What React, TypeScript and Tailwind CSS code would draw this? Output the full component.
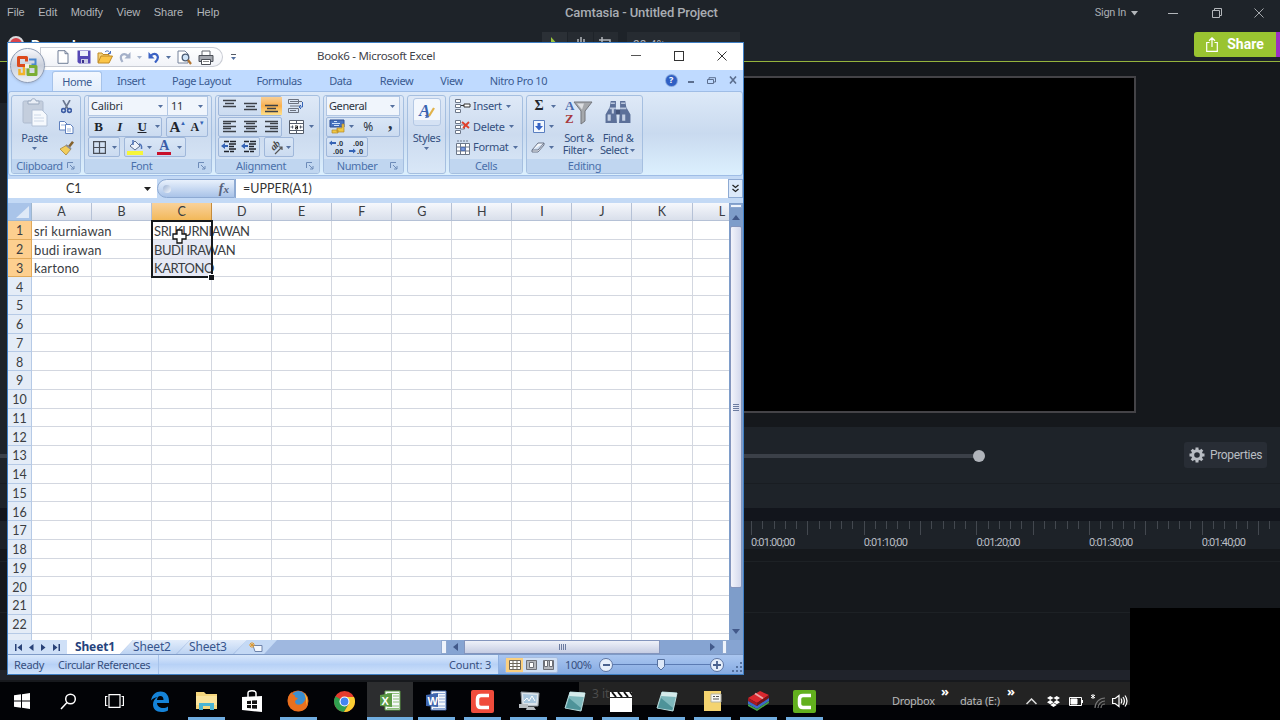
import { ReactNode } from "react";
import { clsx } from "clsx";
import { SiDropbox } from "react-icons/si";

const columns = ["A", "B", "C", "D", "E", "F", "G", "H", "I", "J", "K", "L"];
const rows = Array.from({ length: 23 }, (_, i) => i + 1);

const cells: Record<string, string> = {
  A1: "sri kurniawan",
  A2: "budi irawan",
  A3: "kartono",
  C1: "SRI KURNIAWAN",
  C2: "BUDI IRAWAN",
  C3: "KARTONO",
};

// cells whose right gridline is covered by overflowing text
const overflowing = ["A1", "A2", "C1", "C2"];

const ribbonTabs = [
  { label: "Home", width: "w-[50px]", active: true },
  { label: "Insert", width: "w-[58px]" },
  { label: "Page Layout", width: "w-[83px]" },
  { label: "Formulas", width: "w-[72px]" },
  { label: "Data", width: "w-[51px]" },
  { label: "Review", width: "w-[61px]" },
  { label: "View", width: "w-[49px]" },
  { label: "Nitro Pro 10", width: "w-[85px]" },
];

function Caret({ className = "w-3" }: { className?: string }) {
  return (
    <span className={clsx("flex justify-center shrink-0", className)}>
      <svg className="shrink-0" width="5" height="3" viewBox="0 0 5 3">
        <path d="M0 0h5L2.500 3z" fill="#54709f" />
      </svg>
    </span>
  );
}

function Cell({ className, children }: { className: string; children: ReactNode }) {
  return <span className={clsx("flex self-stretch items-center justify-center shrink-0", className)}>{children}</span>;
}

function Box({ className, children }: { className: string; children: ReactNode }) {
  return (
    <div className={clsx("flex h-5 items-center rounded-[2px] border border-[#9fb7da] bg-gradient-to-b from-[#d9e6f6] to-[#cbdbf0]", className)}>
      {children}
    </div>
  );
}

function Group({ label, className, launcher, children }: { label?: string; className: string; launcher?: boolean; children: ReactNode }) {
  return (
    <div className={clsx("flex h-[79px] shrink-0 flex-col overflow-hidden rounded-[3px] border border-[#a5bfe0] bg-gradient-to-b from-[#dfe9f7] via-[#ccdbef] to-[#d9e7f7]", className)}>
      <div className="h-[63px] shrink-0">{children}</div>
      {label && (
        <div className="flex h-[15px] items-center bg-[#c0d6f0] text-[#4a70ab]">
          <span className="flex-1 text-center">{label}</span>
          {launcher && (
            <svg className="mr-[5px] shrink-0" width="8" height="8" viewBox="0 0 8 8" fill="none" stroke="#6d8bb8">
              <path d="M.5 6V.5H6M3 3l4 4M7 4v3H4" />
            </svg>
          )}
        </div>
      )}
    </div>
  );
}

function AlignIcon({ lines }: { lines: number[][] }) {
  return (
    <svg width="15" height="14" viewBox="0 0 15 14" stroke="#3c4148" strokeWidth="1.300">
      {lines.map(([x1, x2, y]) => (
        <path key={y} d={`M${x1} ${y}.5H${x2}`} />
      ))}
    </svg>
  );
}

function IndentIcon() {
  return (
    <svg width="16" height="14" viewBox="0 0 16 14">
      <path d="M3 1.500h5M9 1.500h6M8 4h7M8 6.500h5M8 9h7M3 11.500h5M9 11.500h4" stroke="#20242c" strokeWidth="1.600" />
      <path d="M0 6l4-3v2h3v2H4v2z" fill="#3563b5" />
    </svg>
  );
}

function GearIcon() {
  return (
    <svg width="16" height="16" viewBox="0 0 16 16" fill="none" stroke="#b9bdc3">
      <circle cx="8" cy="8" r="4.300" strokeWidth="3" />
      <path d="M8 .5v3M8 12.500v3M.5 8h3M12.500 8h3M2.700 2.700l2 2M11.300 11.300l2 2M13.300 2.700l-2 2M4.700 11.300l-2 2" strokeWidth="3" />
    </svg>
  );
}

function TitleBar() {
  return (
    <div className="flex h-[27px] shrink-0 bg-white">
      <div className="ml-8 mt-1 flex h-5 w-[183px] items-center rounded-r-full rounded-tl-[6px] border border-[#c9ccd4] bg-gradient-to-b from-white to-[#f1f3f8] pl-[11px]">
        <Cell className="w-[21px]">
          <svg width="12" height="14" viewBox="0 0 12 14">
            <path d="M1 .7h7l3 3v9.600H1z" fill="#fff" stroke="#6f7d96" />
            <path d="M8 .7v3h3" fill="none" stroke="#6f7d96" />
          </svg>
        </Cell>
        <Cell className="w-[21px]">
          <svg width="14" height="14" viewBox="0 0 14 14">
            <path d="M.5.5h13v13H2L.5 12z" fill="#5547b5" />
            <path d="M3 1h8v5H3z" fill="#eef0fb" />
            <path d="M4 9h7v4.500H4z" fill="#c9cbe2" />
            <path d="M5 10h2v3H5z" fill="#3b318c" />
          </svg>
        </Cell>
        <Cell className="w-[21px]">
          <svg width="16" height="14" viewBox="0 0 16 14">
            <path d="M1 12.500V3h4l1 1.500h6V7" fill="#f5d27a" stroke="#c08a25" />
            <path d="M1 13l3-7h11.500l-3.500 7z" fill="#fbc548" stroke="#c08a25" />
            <path d="M8 2c2-2 4-1 5 1M13.500 1v2.500h-2.500" fill="none" stroke="#456ec0" />
          </svg>
        </Cell>
        <Cell className="w-[19px]">
          <svg width="12" height="12" viewBox="0 0 12 12" fill="none">
            <path d="M3.500 11C-1 4 5 1 9 5" stroke="#a5b1c9" strokeWidth="2.200" />
            <path d="M11.500 1v6.500H5.500z" fill="#a5b1c9" />
          </svg>
        </Cell>
        <span className="w-[10px] opacity-50"><Caret className="w-[10px]" /></span>
        <Cell className="w-[20px]">
          <svg width="12" height="12" viewBox="0 0 12 12" fill="none">
            <path d="M7 11.500C13 6 8 0 3 4.500" stroke="#3b62c4" strokeWidth="2.200" />
            <path d="M.5 1v6.500h6z" fill="#3b62c4" />
          </svg>
        </Cell>
        <Caret className="w-[9px]" />
        <Cell className="w-[23px]">
          <svg width="15" height="15" viewBox="0 0 15 15">
            <path d="M1 1h7l3 3v9H1z" fill="#fff" stroke="#74829b" />
            <circle cx="8.500" cy="7.500" r="3.300" fill="#cfe3f7" stroke="#4c5c75" strokeWidth="1.300" />
            <path d="M11 10l3 4" stroke="#b27430" strokeWidth="2.200" />
          </svg>
        </Cell>
        <Cell className="w-[19px]">
          <svg width="16" height="15" viewBox="0 0 16 15">
            <path d="M4 6V1h8v5" fill="#fff" stroke="#62666e" />
            <path d="M1 5.500h14v6H1z" fill="#a4a7ae" stroke="#4b4f57" />
            <path d="M3.500 9.500h9v5h-9z" fill="#fff" stroke="#4b4f57" />
            <path d="M5 11.500h6" stroke="#888" />
          </svg>
        </Cell>
      </div>
      <div className="flex w-5 flex-col items-center justify-center gap-[2px]">
        <span className="h-px w-[5px] bg-[#555b66]" />
        <Caret />
      </div>
      <span className="ml-[74px] flex h-[25px] items-center text-[11.5px] tracking-[-0.3px] text-[#3f434a]">Book6 - Microsoft Excel</span>
      <div className="ml-auto flex h-[25px] text-[#333]">
        <Cell className="w-[42px]"><span className="h-px w-[10px] bg-[#555]" /></Cell>
        <Cell className="w-[43px]"><span className="size-[10px] border border-[#333]" /></Cell>
        <Cell className="w-[43px]">
          <svg width="10" height="10" viewBox="0 0 10 10" stroke="#333"><path d="M.5.5l9 9M9.500.5l-9 9" /></svg>
        </Cell>
      </div>
    </div>
  );
}

function OfficeOrb() {
  return (
    <div className="absolute left-[2px] top-[5px] flex size-[35px] items-center justify-center rounded-full border border-[#8e9cb5] bg-gradient-to-b from-[#f8f9fc] via-[#c9cfdb] to-[#eef2f9] shadow">
      <svg width="23" height="23" viewBox="0 0 23 23" fill="none" strokeWidth="3">
        <path d="M9.500 11.500H2.500V3.500h8v4" stroke="#dc4a1c" strokeLinejoin="round" />
        <path d="M13 5.500h6.500v5h-4" stroke="#4a87cf" strokeWidth="2" />
        <path d="M8 13v7H3.500v-5" stroke="#f2b32a" strokeWidth="2.500" />
        <path d="M12.500 12.500h7.500v8h-8v-6" stroke="#7bae35" strokeLinejoin="round" />
        <path d="M9 10h4v4H9z" fill="#f5f1de" stroke="none" />
      </svg>
    </div>
  );
}

function TabStrip() {
  return (
    <div className="flex h-[21px] shrink-0 items-end bg-[#bfdaff] pl-[44px] text-[#3a5b92]">
      {ribbonTabs.map((tab) => (
        <div
          key={tab.label}
          className={clsx(
            "flex h-5 shrink-0 items-center justify-center whitespace-nowrap",
            tab.width,
            tab.active && "rounded-t-[3px] border border-b-0 border-[#a6c3ea] bg-gradient-to-b from-[#f4f8fe] to-[#e4eefb]"
          )}
        >
          {tab.label}
        </div>
      ))}
      <div className="ml-auto flex h-[22px] items-center">
        <Cell className="w-[20px]">
          <span className="flex size-[11px] items-center justify-center rounded-full bg-[#2f5fc4] text-[9px] font-bold text-white ring-1 ring-[#86a7dc]">?</span>
        </Cell>
        <Cell className="w-[20px]"><span className="mt-1 h-[1.5px] w-[6px] bg-[#5c6f8f]" /></Cell>
        <Cell className="w-[21px]">
          <svg width="9" height="7" viewBox="0 0 9 7" fill="none" stroke="#5c6f8f">
            <path d="M2 2V.7h6.500V5H7M.5 2.500H6.500v4h-6z" />
          </svg>
        </Cell>
        <Cell className="w-[21px]">
          <svg width="8" height="8" viewBox="0 0 8 8" stroke="#5c6f8f" strokeWidth="1.600"><path d="M1 .5l6 7M7 .5l-6 7" /></svg>
        </Cell>
      </div>
    </div>
  );
}

function ClipboardGroup() {
  return (
    <Group label="Clipboard" className="w-[70px]" launcher>
      <div className="flex">
        <div className="flex w-[45px] flex-col items-center pt-[2px] text-[#34507f]">
          <svg width="26" height="29" viewBox="0 0 26 29">
            <rect x="1" y="3" width="20" height="22" rx="1.500" fill="#c4cedd" stroke="#aebbcf" />
            <path d="M6 5V3h3c0-3 5-3 5 0h3v3H6z" fill="#e9eef6" stroke="#9aa9bf" />
            <path d="M10 12h10l5 5v11H10z" fill="#f6f9fd" stroke="#b3c1d6" />
            <path d="M12 17h7M12 20h10M12 23h10" stroke="#cdd8e8" />
          </svg>
          <span className="mt-[3px] leading-[16px]">Paste</span>
          <Caret className="mt-px w-3" />
        </div>
        <div className="flex w-[18px] flex-col items-center">
          <Cell className="h-[21px]">
            <svg width="11" height="14" viewBox="0 0 11 14" fill="none" stroke="#3f5fa6" strokeWidth="1.600">
              <path d="M2 0l5 9M9 0L4 9" stroke="#6b7891" />
              <circle cx="2.500" cy="10.500" r="1.900" /><circle cx="8.500" cy="10.500" r="1.900" />
            </svg>
          </Cell>
          <Cell className="h-[21px]">
            <svg width="15" height="13" viewBox="0 0 15 13" fill="#fff" stroke="#5f80bd">
              <path d="M.5.5h5l2.500 2.500v6H.5z" /><path d="M6.500 3.500h5l2.500 2.500v6.500H6.500z" />
              <path d="M2 4h4M8 8h4M8 10h4" stroke="#9cb4dc" />
            </svg>
          </Cell>
          <Cell className="h-[20px]">
            <svg width="15" height="14" viewBox="0 0 15 14">
              <path d="M9 5l4-5 2 1.500-4 5z" fill="#85622c" />
              <path d="M1 8l7-4 4 4-5 6z" fill="#f1cd5c" stroke="#a8873a" strokeWidth=".8" />
              <path d="M7 4l5 4" stroke="#8a8d96" strokeWidth="1.800" />
            </svg>
          </Cell>
        </div>
      </div>
    </Group>
  );
}

function FontGroup() {
  return (
    <Group label="Font" className="w-[128px]" launcher>
      <div className="flex flex-col gap-[0.5px] px-[3px]">
        <div className="flex h-5 w-[120px] border border-[#b2c7e4] bg-[#f0f5fc] text-[#2c3340]">
          <div className="flex w-[78px] items-center pl-[2px]"><span className="flex-1 tracking-[-0.2px]">Calibri</span><Caret className="w-[13px]" /></div>
          <div className="flex flex-1 items-center border-l border-[#b2c7e4] pl-[3px]"><span className="flex-1">11</span><Caret className="w-[13px]" /></div>
        </div>
        <div className="flex gap-1 font-['Liberation_Serif',serif] font-bold text-[#20242c]">
          <Box className="w-[74px]">
            <Cell className="w-[19px] text-[13px]">B</Cell>
            <Cell className="w-[23px] text-[13px] italic">I</Cell>
            <Cell className="w-[22px] text-[13px] underline">U</Cell>
            <Caret className="w-[8px]" />
          </Box>
          <Box className="w-[42px]">
            <Cell className="w-[21px] text-[15px]">A<span className="-mt-2 text-[6px] text-[#3563b5]">▲</span></Cell>
            <Cell className="w-[19px] text-[12px]">A<span className="-mt-2 text-[6px] text-[#3563b5]">▼</span></Cell>
          </Box>
        </div>
        <div className="flex gap-1">
          <Box className="w-[32px]">
            <Cell className="w-[21px]">
              <svg width="13" height="13" viewBox="0 0 13 13" fill="none" stroke="#4a4f58" strokeWidth="1.200"><path d="M.6.6h11.800v11.800H.6zM6.500.6v11.800M.6 6.500h11.800" /></svg>
            </Cell>
            <Caret className="w-[9px]" />
          </Box>
          <Box className="w-[62px]">
            <Cell className="w-[20px]">
              <svg width="16" height="16" viewBox="0 0 16 16">
                <path d="M3 7l5-5 5 5-5 4z" fill="#eef3fa" stroke="#5d6f91" />
                <path d="M6 1v5M12 5c2 0 3 2 2.500 5" stroke="#4f74b8" strokeWidth="1.500" fill="none" />
                <path d="M0 12h16v4H0z" fill="#f5f53a" />
              </svg>
            </Cell>
            <Caret className="w-[9px]" />
            <Cell className="w-[20px]">
              <span className="flex flex-col items-center font-['Liberation_Serif',serif] text-[14px] font-bold leading-[13px] text-[#3a5da8]">A<span className="h-[3px] w-[14px] bg-[#c8102a]" /></span>
            </Cell>
            <Caret className="w-[10px]" />
          </Box>
        </div>
      </div>
    </Group>
  );
}

function AlignmentGroup() {
  return (
    <Group label="Alignment" className="w-[105px]" launcher>
      <div className="flex flex-col gap-[0.5px] pl-[2px]">
        <div className="flex">
          <Box className="w-[64px]">
            <Cell className="w-[21px]"><AlignIcon lines={[[1, 14, 1], [3, 12, 4], [1, 14, 7]]} /></Cell>
            <Cell className="w-[21px]"><AlignIcon lines={[[1, 14, 4], [3, 12, 7], [1, 14, 10]]} /></Cell>
            <Cell className="w-[21px] bg-gradient-to-b from-[#f8cf95] via-[#f9b04c] to-[#fde08a] pt-1"><AlignIcon lines={[[1, 14, 4], [3, 12, 7], [1, 14, 10]]} /></Cell>
          </Box>
          <Cell className="w-[28px]">
            <svg width="16" height="15" viewBox="0 0 16 15" fill="none" stroke="#6b7280">
              <path d="M.5.5h10v4H.5zM.5 9.500h10v4H.5zM2 2.500h12M2 7h10M2 11.500h6" />
              <path d="M14.500 3v5h-3M13 6l-2 2 2 2" stroke="#3563b5" />
            </svg>
          </Cell>
        </div>
        <div className="flex">
          <Box className="w-[64px]">
            <Cell className="w-[21px]"><AlignIcon lines={[[1, 14, 1], [1, 9, 3], [1, 14, 6], [1, 9, 8], [1, 14, 11]]} /></Cell>
            <Cell className="w-[21px]"><AlignIcon lines={[[1, 14, 1], [3, 12, 3], [1, 14, 6], [3, 12, 8], [1, 14, 11]]} /></Cell>
            <Cell className="w-[21px]"><AlignIcon lines={[[1, 14, 1], [6, 14, 3], [1, 14, 6], [6, 14, 8], [1, 14, 11]]} /></Cell>
          </Box>
          <Cell className="w-[28px]">
            <svg width="15" height="14" viewBox="0 0 15 14" fill="#fff" stroke="#555d6b">
              <path d="M.5.5h14v13H.5zM.5 3.500h14M.5 10.500h14M7.500 0v3M7.500 11v3" />
              <path d="M1.500 7h3M10.500 7h3M3.500 5.500v3M11.500 5.500v3" />
              <path d="M6 6h2.500v3H6.500V7.500h2" stroke="#222" />
            </svg>
          </Cell>
          <Caret className="w-[2px] self-center" />
        </div>
        <div className="flex gap-1">
          <Box className="w-[42px]">
            <Cell className="w-[20px]"><IndentIcon /></Cell>
            <Cell className="w-[20px]"><IndentIcon /></Cell>
          </Box>
          <Box className="w-[30px]">
            <Cell className="w-[20px]">
              <svg width="18" height="17" viewBox="0 0 18 17">
                <text x="0" y="0" transform="translate(8 12) rotate(-45)" fontFamily="Liberation Serif" fontSize="10" fontStyle="italic" fontWeight="bold" fill="#444">ab</text>
                <path d="M9 15l7-7M16 11V8h-3" stroke="#555" strokeWidth="1.200" fill="none" />
              </svg>
            </Cell>
            <Caret className="w-[6px]" />
          </Box>
        </div>
      </div>
    </Group>
  );
}

function NumberGroup() {
  return (
    <Group label="Number" className="w-[81px]" launcher>
      <div className="flex flex-col gap-[0.5px] pl-[2px] text-[#2c3340]">
        <div className="flex h-5 w-[74px] items-center border border-[#b2c7e4] bg-[#f0f5fc] pl-[2px]">
          <span className="flex-1">General</span>
          <Caret className="w-[14px]" />
        </div>
        <Box className="w-[74px]">
          <Cell className="w-[20px]">
            <svg width="16" height="15" viewBox="0 0 16 15">
              <path d="M1 1h14v7H1z" fill="#4670bd" stroke="#2e4f94" />
              <path d="M3 4.500h8M5 2.500h3M5 6.500h5" stroke="#cfe0f8" />
              <path d="M8 9h5V5h2v8H8zM3 11h6v3H3z" fill="#f0c846" stroke="#b3882a" strokeWidth=".7" />
            </svg>
          </Cell>
          <Caret className="w-[8px]" />
          <Cell className="w-[26px] text-[12px]">%</Cell>
          <Cell className="w-[18px] pb-2 font-['Liberation_Serif',serif] text-[18px] font-bold">,</Cell>
        </Box>
        <Box className="w-[42px] font-['Liberation_Sans',sans-serif] font-bold tracking-normal">
          <Cell className="w-[20px]">
            <svg width="16" height="18" viewBox="0 0 16 18" fontSize="7.500" fill="#2c3340">
              <text x="8" y="8">.0</text><text x="4" y="16">.00</text>
              <path d="M0 5l3-2.500V4h4v2H3v1.500z" fill="#3563b5" />
            </svg>
          </Cell>
          <Cell className="w-[20px]">
            <svg width="16" height="18" viewBox="0 0 16 18" fontSize="7.500" fill="#2c3340">
              <text x="4" y="8">.00</text><text x="8" y="16">.0</text>
              <path d="M7 13l-3-2.500V12H0v2h4v1.500z" fill="#3563b5" />
            </svg>
          </Cell>
        </Box>
      </div>
    </Group>
  );
}

function StylesGroup() {
  return (
    <Group className="w-[39px]">
      <div className="flex flex-col items-center pt-[2px] text-[#34507f]">
        <div className="flex h-[28px] w-[28px] flex-col rounded-[3px] border border-[#b4c8e4] bg-[#d5e2f4]">
          <div className="flex h-[21px] items-center justify-center rounded-t-[3px] bg-[#f3f7fd]">
            <svg width="18" height="18" viewBox="0 0 18 18">
              <text x="1" y="15" fontFamily="Liberation Serif" fontSize="17" fontStyle="italic" fontWeight="bold" fill="#3963b0">A</text>
              <path d="M11 15l5-8" stroke="#e1b24a" strokeWidth="2.200" />
              <path d="M7 17c1-3 3-3 4-2s-1 2-4 2z" fill="#4a6db5" />
            </svg>
          </div>
        </div>
        <span className="mt-1 leading-[16px]">Styles</span>
        <Caret className="mt-px w-3" />
      </div>
    </Group>
  );
}

function CellsGroup() {
  return (
    <Group label="Cells" className="w-[74px]">
      <div className="flex flex-col pl-[5px] tracking-[-0.3px] text-[#34507f]">
        <div className="flex h-[20px] items-center">
          <svg width="16" height="14" viewBox="0 0 16 14" fill="#fff" stroke="#6c7789">
            <path d="M.5.5h5v3h-5zM.5 5.500h5v3h-5zM.5 10.500h5v3h-5z" /><path d="M9 5h6v3H9zM6 6.500h3" stroke="#333" />
          </svg>
          <span className="ml-[2px]">Insert</span><Caret className="w-[13px]" />
        </div>
        <div className="flex h-[21px] items-center">
          <svg width="16" height="14" viewBox="0 0 16 14" fill="#fff" stroke="#6c7789">
            <path d="M.5.500h5v3h-5zM.5 5.500h5v3h-5zM.5 10.500h5v3h-5zM5.500 5h4v4h-4z" /><path d="M7 2l7 6M14 2L8 8" stroke="#e0402b" strokeWidth="1.900" />
          </svg>
          <span className="ml-[2px]">Delete</span><Caret className="w-[14px]" />
        </div>
        <div className="flex h-[20px] items-center">
          <svg width="16" height="15" viewBox="0 0 16 15" fill="#fff" stroke="#6c7789">
            <path d="M1.500 3.500h13v11h-13zM1.500 7h13M1.500 11h13M5.500 3v12M10.500 3v12" /><path d="M6 7.500h4v3H6z" fill="#7c9ce0" stroke="#5474b8" /><path d="M2 1h12" strokeDasharray="2 1" />
          </svg>
          <span className="ml-[2px]">Format</span><Caret className="w-[13px]" />
        </div>
      </div>
    </Group>
  );
}

function EditingGroup() {
  return (
    <Group label="Editing" className="w-[117px]">
      <div className="flex text-[#34507f]">
        <div className="flex w-[32px] flex-col">
          <div className="flex h-[20px] items-center">
            <Cell className="w-[24px] font-['Liberation_Serif',serif] text-[14px] font-bold text-[#23262c]">Σ</Cell><Caret className="w-[5px]" />
          </div>
          <div className="flex h-[21px] items-center">
            <Cell className="w-[23px]">
              <svg width="12" height="13" viewBox="0 0 12 13"><path d="M.5.5h11v12H.5z" fill="#f2f7fe" stroke="#5a7fc0" /><path d="M4.500 3h3v3h2.500L6 10.500 2 6h2.500z" fill="#3563c5" /></svg>
            </Cell>
            <Caret className="w-[3px]" />
          </div>
          <div className="flex h-[20px] items-center">
            <Cell className="w-[23px]">
              <svg width="15" height="11" viewBox="0 0 15 11"><path d="M1 8l6-7h6l-6 7zM1 8v2h6l6-7V1" fill="#f7f9fc" stroke="#6a7488" /></svg>
            </Cell>
            <Caret className="w-[3px]" />
          </div>
        </div>
        <div className="-ml-1 flex w-[48px] flex-col items-center pt-[3px] leading-[12px]">
          <svg width="28" height="27" viewBox="0 0 28 27">
            <text x="0" y="11" fontFamily="Liberation Serif" fontSize="13" fontWeight="bold" fill="#4a6cae">A</text>
            <text x="0" y="24" fontFamily="Liberation Serif" fontSize="13" fontWeight="bold" fill="#a83a3e">Z</text>
            <path d="M9 3h18l-7 9v10l-4 3V12z" fill="#a5a8ac" stroke="#74777d" />
            <path d="M12 4.500h7l-2 6z" fill="#dcdee1" />
          </svg>
          <span className="mt-[6px]">Sort &amp;</span>
          <span className="flex items-center">Filter<Caret className="w-[9px]" /></span>
        </div>
        <div className="-ml-[5px] flex w-[40px] flex-col items-center pt-[3px] leading-[12px]">
          <svg width="28" height="27" viewBox="0 0 26 26">
            <path d="M6 2h5v7l1 14H1v-8l4-7zM20 2h-5v7l-1 14h11v-8l-4-7z" fill="#5c7099" />
            <path d="M6 4h4M16 4h4M5 9h6M15 9h6" stroke="#b9c6dd" strokeWidth="1.500" />
            <path d="M3 15h3v6H3zM17 15h3v6h-3zM7 9h2v5H7z" fill="#c3cfe4" />
            <path d="M11 10h4v5h-4z" fill="#44557a" />
          </svg>
          <span className="mt-[6px] whitespace-nowrap">Find &amp;</span>
          <span className="flex items-center">Select<Caret className="w-[8px]" /></span>
        </div>
      </div>
    </Group>
  );
}

function FormulaBar() {
  return (
    <div className="flex h-[27px] shrink-0 bg-[#c3d9f5] pt-[3px] tracking-normal">
      <div className="flex h-[19px] w-[149px] items-center bg-white font-['Lato',sans-serif] text-[12.5px] text-[#333]">
        <span className="flex-1 pl-[58px]">C1</span>
        <svg className="mr-[6px]" width="7" height="4" viewBox="0 0 7 4"><path d="M0 0h7L3.500 4z" fill="#222" /></svg>
      </div>
      <div className="flex h-[19px] w-[78px] items-center justify-between rounded-l-full border border-[#8eaad3] bg-gradient-to-b from-[#e9f1fc] to-[#a9c3e8] pl-[5px] pr-[5px]">
        <span className="size-[8px] rounded-full bg-gradient-to-br from-[#9fb4d4] to-[#f4f8fd]" />
        <span className="font-['Liberation_Serif',serif] text-[14px] font-bold italic text-[#56617a]">f<span className="text-[11px]">x</span></span>
      </div>
      <div className="flex h-[19px] flex-1 items-center border-l border-[#8eaad3] bg-white pl-[7px] font-['Lato',sans-serif] text-[12.5px] text-[#333]">=UPPER(A1)</div>
      <div className="flex h-[19px] w-[15px] items-center justify-center border border-[#8eaad3] bg-[#dce9fa]">
        <svg width="7" height="9" viewBox="0 0 7 9" fill="none" stroke="#222" strokeWidth="1.300"><path d="M.5 1l3 2.500 3-2.500M.5 5l3 2.500 3-2.500" /></svg>
      </div>
    </div>
  );
}

function Sheet() {
  return (
    <div className="relative flex h-[437px] w-[721px] shrink-0 flex-col overflow-hidden bg-white font-['Lato',sans-serif] text-[13px] tracking-normal text-[#3a3d42]">
      <div className="flex h-[18px] shrink-0 text-[12.5px]">
        <div className="flex w-6 shrink-0 items-end justify-end border-b border-r border-[#9eb6ce] bg-[#a9c4e9] p-[2px]">
          <svg width="13" height="12" viewBox="0 0 13 12"><path d="M13 0v12H0z" fill="#dfe9f7" /></svg>
        </div>
        {columns.map((col) => (
          <div
            key={col}
            className={clsx(
              "flex w-[60.05px] shrink-0 items-center justify-center border-b border-r",
              col === "C"
                ? "border-[#c58b3a] bg-gradient-to-b from-[#f9d29a] to-[#f2b858]"
                : "border-[#b5c1d6] bg-gradient-to-b from-[#f6f8fc] to-[#d9dfeb]"
            )}
          >
            {col}
          </div>
        ))}
      </div>
      {rows.map((row) => (
        <div key={row} className="flex h-[18.75px] shrink-0">
          <div
            className={clsx(
              "flex w-6 shrink-0 items-center justify-center border-b border-r pt-[3px] text-[12.5px]",
              row <= 3 ? "border-[#e0a95a] bg-[#fdcf8f]" : "border-[#b6cae6] bg-[#e4ecf7]"
            )}
          >
            {row < 23 && row}
          </div>
          {columns.map((col) => {
            const id = col + row;
            return (
              <div
                key={id}
                className={clsx(
                  "flex w-[60.05px] shrink-0 items-center whitespace-nowrap border-b border-r border-b-[#d3d7e0] pl-[2px] pt-[2px]",
                  overflowing.includes(id) ? "border-r-transparent" : "border-r-[#d3d7e0]",
                  col === "C" ? "tracking-[-0.5px]" : "tracking-[0.12px]",
                  (id === "C2" || id === "C3") && "bg-[#e6e9f5]"
                )}
              >
                <span className="relative">{cells[id]}</span>
              </div>
            );
          })}
        </div>
      ))}
      {/* selection frame and mouse pointer */}
      <div className="absolute left-[143px] top-[17px] h-[58px] w-[62px] border-2 border-[#15181c]" />
      <div className="absolute left-[200px] top-[71px] size-[6px] border-l border-t border-white bg-[#15181c]" />
      <svg className="absolute left-[164px] top-[26px]" width="15" height="15" viewBox="0 0 15 15">
        <path d="M5 1h5v4h4v5h-4v4H5v-4H1V5h4z" fill="#fff" stroke="#111" strokeWidth="1.300" />
      </svg>
    </div>
  );
}

function VerticalScroll() {
  return (
    <div className="flex w-[14px] flex-col items-center bg-[#7e9dca]">
      <div className="my-px h-1 w-[12px] border border-[#8aa5cf] bg-[#eef4fc]" />
      <div className="flex h-[17px] items-center"><svg width="8" height="5" viewBox="0 0 8 5"><path d="M0 5h8L4 0z" fill="#42598a" /></svg></div>
      <div className="flex h-[362px] w-[12px] flex-col items-center justify-center gap-px rounded-[2px] border border-[#8495bd] bg-gradient-to-r from-[#f3f4fb] to-[#d3d8ec]">
        <span className="h-px w-[6px] bg-[#6c7ba0]" />
        <span className="h-px w-[6px] bg-[#6c7ba0]" />
        <span className="h-px w-[6px] bg-[#6c7ba0]" />
        <span className="h-px w-[6px] bg-[#6c7ba0]" />
      </div>
      <svg className="mb-[6px] mt-auto" width="8" height="5" viewBox="0 0 8 5"><path d="M0 0h8L4 5z" fill="#42598a" /></svg>
    </div>
  );
}

function SheetTabs() {
  return (
    <div className="flex h-[15px] shrink-0 border-b border-[#7f9bc7] bg-[#9fb8e0]">
      <div className="flex w-[59px] items-center justify-around bg-[#cfe0f7] px-[2px]">
        <svg width="8" height="7" viewBox="0 0 8 7" fill="#2a4278"><path d="M1 0h1.500v7H1zM8 0v7L3.500 3.500z" /></svg>
        <svg width="5" height="7" viewBox="0 0 5 7" fill="#2a4278"><path d="M4.500 0v7L0 3.500z" /></svg>
        <svg width="5" height="7" viewBox="0 0 5 7" fill="#2a4278"><path d="M0 0v7l4.500-3.500z" /></svg>
        <svg width="8" height="7" viewBox="0 0 8 7" fill="#2a4278"><path d="M5.500 0H7v7H5.500zM0 0v7l4.500-3.500z" /></svg>
      </div>
      <div className="flex text-[12px] leading-[14px] tracking-[-0.15px] text-[#37558d]">
        <div className="z-40 w-[66px] bg-white pl-2 font-bold text-[#26437c] [clip-path:polygon(0_0,100%_0,80%_100%,0_100%)]">Sheet1</div>
        <div className="z-30 -ml-[13px] w-[70px] bg-gradient-to-b from-[#e3edfb] to-[#bcd3f2] pl-[13px] [clip-path:polygon(19%_0,100%_0,80%_100%,0_100%)]">Sheet2</div>
        <div className="z-20 -ml-[13px] w-[70px] bg-gradient-to-b from-[#e3edfb] to-[#bcd3f2] pl-[12px] [clip-path:polygon(19%_0,100%_0,80%_100%,0_100%)]">Sheet3</div>
        <div className="z-10 -ml-[13px] flex w-[43px] items-center justify-center bg-[#c4d9f5] [clip-path:polygon(30%_0,100%_0,70%_100%,0_100%)]">
          <svg width="14" height="11" viewBox="0 0 14 11"><path d="M4 3.500h9v6H6z" fill="#f5f8fd" stroke="#6d83ab" /><path d="M3 0v6M0 3h6M1 1l4 4M5 1L1 5" stroke="#e09a2f" /></svg>
        </div>
      </div>
      <div className="ml-auto flex bg-[#86a4d2]">
        <span className="w-[6px] border border-[#8fa8cf] bg-[#eef3fb]" />
        <Cell className="w-[17px]"><svg width="5" height="8" viewBox="0 0 5 8"><path d="M5 0v8L0 4z" fill="#42598a" /></svg></Cell>
        <div className="flex w-[196px] items-center justify-center gap-px border border-[#8495bd] bg-gradient-to-b from-[#eff1f9] to-[#c6cde3]">
          <span className="h-[6px] w-px bg-[#6c7ba0]" />
          <span className="h-[6px] w-px bg-[#6c7ba0]" />
          <span className="h-[6px] w-px bg-[#6c7ba0]" />
          <span className="h-[6px] w-px bg-[#6c7ba0]" />
        </div>
        <Cell className="ml-[43px] w-[19px]"><svg width="5" height="8" viewBox="0 0 5 8"><path d="M0 0v8l5-4z" fill="#42598a" /></svg></Cell>
        <span className="mr-[16px] w-[5px] border border-[#8fa8cf] bg-[#eef3fb]" />
      </div>
    </div>
  );
}

function StatusBar() {
  return (
    <div className="flex h-[19px] shrink-0 items-center bg-gradient-to-b from-[#d9e8fb] via-[#b7d1f6] to-[#cfe2fb] text-[#37507f]">
      <span className="w-[44px] pl-[6px] tracking-[-0.3px]">Ready</span>
      <span className="flex h-full items-center border-r border-[#a6c2ea] pl-[6px] pr-2">Circular References</span>
      <span className="ml-auto w-[49px] tracking-[-0.15px]">Count: 3</span>
      <div className="flex h-full w-[245px] items-center border-l border-[#8fb0e0] bg-gradient-to-b from-[#aac6f0] to-[#86abe2] pl-[6px]">
        <div className="flex h-[16px] w-[53px] rounded-[2px] border border-[#a7bde0] bg-[#d0dff4]">
          <Cell className="w-[17px] bg-[#fbd07f]">
            <svg width="12" height="10" viewBox="0 0 12 10" fill="#fff" stroke="#6d675c"><path d="M.5.5h11v9H.5zM4 0v10M8 0v10M0 3.500h12M0 6.500h12" /></svg>
          </Cell>
          <Cell className="w-[17px]">
            <svg width="11" height="10" viewBox="0 0 11 10" fill="#b5b8be" stroke="#6d7078"><path d="M.5.5h10v9H.5z" /><path d="M3.500 2.500h4v5h-4z" fill="#fff" /></svg>
          </Cell>
          <Cell className="w-[17px]">
            <svg width="11" height="10" viewBox="0 0 11 10" fill="#b5b8be" stroke="#6d7078"><path d="M.5.5h10v9H.5z" /><path d="M1.500.5h3v6h-3zM6.500.5h3v6h-3z" fill="#fff" /></svg>
          </Cell>
        </div>
        <span className="ml-[7px] w-[34px]">100%</span>
        <div className="relative flex w-[125px] items-center">
          <span className="flex size-[14px] items-center justify-center rounded-full border border-[#5c74a3] bg-[#e6effb]"><span className="h-[2px] w-[7px] bg-[#4a628f]" /></span>
          <span className="h-px flex-1 bg-[#5b7bb3]" />
          <span className="flex size-[14px] items-center justify-center rounded-full border border-[#5c74a3] bg-[#e6effb]">
            <svg width="8" height="8" viewBox="0 0 8 8" stroke="#4a628f" strokeWidth="1.800"><path d="M4 0v8M0 4h8" /></svg>
          </span>
          <svg className="absolute left-[58px] top-[1px]" width="8" height="12" viewBox="0 0 8 12"><path d="M.5.5h7v7L4 11 .5 7.500z" fill="#dde8f8" stroke="#56719f" /></svg>
        </div>
        <svg className="ml-auto mr-px mt-1" width="10" height="10" viewBox="0 0 10 10" fill="#54719f"><path d="M8 0h2v2H8zM8 4h2v2H8zM8 8h2v2H8zM4 4h2v2H4zM4 8h2v2H4zM0 8h2v2H0z" /></svg>
      </div>
    </div>
  );
}

function ExcelWindow() {
  return (
    <div className="absolute left-[7px] top-[42px] flex h-[633px] w-[737px] flex-col border border-[#3f7fc4] bg-[#bfdaff] font-['Noto_Sans',sans-serif] text-[11px] leading-[14px] tracking-[-0.4px]">
      <TitleBar />
      <OfficeOrb />
      <TabStrip />
      <div className="flex h-[85px] shrink-0 gap-[3px] rounded-[3px] border border-[#9fbde6] bg-gradient-to-b from-[#dde9f8] via-[#c9daef] to-[#dcf0fe] pl-[2px] pt-[3px]">
        <ClipboardGroup />
        <FontGroup />
        <AlignmentGroup />
        <NumberGroup />
        <StylesGroup />
        <CellsGroup />
        <EditingGroup />
      </div>
      <FormulaBar />
      <div className="flex h-[437px] shrink-0">
        <Sheet />
        <VerticalScroll />
      </div>
      <SheetTabs />
      <StatusBar />
    </div>
  );
}

const timeMarks = ["0:01:00;00", "0:01:10;00", "0:01:20;00", "0:01:30;00", "0:01:40;00"];

function Ruler() {
  return (
    <div className="flex h-7 overflow-hidden bg-[#1d2228] pl-[751px] text-[11px] text-[#b9bdc3]">
      {timeMarks.map((mark) => (
        <div key={mark} className="flex w-[112.7px] shrink-0 flex-col">
          <div className="flex h-[14px]">
            {Array.from({ length: 10 }, (_, i) => (
              <span key={i} className={clsx("w-[11.27px] shrink-0 border-l border-[#43484f]", i % 5 === 0 ? "h-[14px]" : "h-[8px]")} />
            ))}
          </div>
          <span className="leading-[15px] tracking-[-0.75px]">{mark}</span>
        </div>
      ))}
    </div>
  );
}

function Camtasia() {
  return (
    <div className="flex h-[682px] flex-col bg-[#15181c] font-['Roboto',sans-serif] text-[#a9adb3]">
      <div className="flex h-[61px] shrink-0 flex-col bg-[#1e2329]">
        <div className="flex h-[26px] items-center text-[11px]">
          <div className="flex w-[565px] items-center gap-[13.5px] pb-px pl-[7px] font-['Liberation_Sans',sans-serif] text-[#b3b6ba]">
            {["File", "Edit", "Modify", "View", "Share", "Help"].map((item) => <span key={item}>{item}</span>)}
          </div>
          <span className="text-[13px] font-medium tracking-[-0.12px]">Camtasia - Untitled Project</span>
          <span className="ml-auto flex items-center gap-[5px] tracking-[-0.3px]">
            Sign In
            <svg width="7" height="5" viewBox="0 0 7 5"><path d="M0 0h7L3.500 4.500z" fill="#b3b6ba" /></svg>
          </span>
          <div className="ml-[13px] flex self-stretch">
            <Cell className="w-[44px]"><span className="h-px w-[10px] bg-[#b3b6ba]" /></Cell>
            <Cell className="w-[43px]">
              <svg width="10" height="10" viewBox="0 0 10 10" fill="none" stroke="#b3b6ba"><path d="M.5 2.500h7v7h-7zM2.500 2V.5h7v7H8" /></svg>
            </Cell>
            <Cell className="w-[42px]">
              <svg width="10" height="10" viewBox="0 0 11 11" stroke="#b3b6ba"><path d="M.5.5l10 10M10.500.5l-10 10" /></svg>
            </Cell>
          </div>
        </div>
        <div className="flex flex-1 items-start">
          <div className="ml-2 mt-[10px] flex h-5 w-[534px] items-start gap-[7px] text-[14px] font-bold text-white">
            <span className="size-4 rounded-full border-2 border-[#d9d9dc] bg-[#d8434b]" />
            <span className="pt-px leading-[18px]">Record</span>
          </div>
          <div className="mt-[6px] flex h-6 gap-px">
            <Cell className="w-[25px] bg-[#2b3036]">
              <svg width="11" height="14" viewBox="0 0 11 14"><path d="M2 0l8 9H2z" fill="#9bc53d" /></svg>
            </Cell>
            <Cell className="w-[25px] bg-[#262b31]">
              <svg width="12" height="14" viewBox="0 0 12 14" stroke="#b3b6ba" strokeWidth="1.500"><path d="M3 2v8M6 0v9M9 2v8" /></svg>
            </Cell>
            <Cell className="w-[24px] bg-[#262b31]">
              <svg width="14" height="14" viewBox="0 0 14 14" stroke="#b3b6ba" strokeWidth="1.500" fill="none"><path d="M3 0v11h10M0 3h11v10" /></svg>
            </Cell>
            <span className="ml-[8px] w-[113px] bg-[#262b31] pl-[6px] text-[12px] leading-[27px]">33.4%</span>
          </div>
          <div className="ml-auto mt-[6px] flex h-[25px] w-[82px] items-center justify-center gap-[9px] rounded-l-[3px] bg-[#9ac431] text-[14px] font-bold text-white">
            <svg width="12" height="15" viewBox="0 0 12 15" fill="none" stroke="#fff" strokeWidth="1.200"><path d="M3.500 5.500H.7v8.800h10.600V5.500H8.500M6 10V1M3 3.700L6 .8l3 2.900" /></svg>
            Share
          </div>
          <span className="mt-[6px] h-[25px] w-1 bg-[#9b30c4]" />
        </div>
      </div>
      <div className="h-px shrink-0 bg-[#95b33c]" />
      <div className="flex h-[365px] shrink-0">
        <div className="h-full w-[7px] border-t-[41px] border-[#15181c] bg-[#1e2329]" />
        <div className="mt-[14px] h-[337px] w-[1129px] border-2 border-[#444347] bg-black" />
      </div>
      <div className="flex h-[57px] shrink-0 items-center border-b border-[#191d22] bg-[#1e2329]">
        <div className="mt-px h-[4px] w-[979px] bg-[#3b4048]" />
        <span className="-ml-[6px] mt-px size-3 rounded-full bg-[#b0b4ba]" />
        <div className="ml-auto mr-[13px] flex h-[26px] w-[83px] items-center justify-center gap-[5px] rounded-[3px] bg-[#282d35] text-[12px] text-[#b9bdc3]">
          <GearIcon />
          <span className="tracking-[-0.3px]">Properties</span>
        </div>
      </div>
      <div className="h-6 shrink-0 bg-[#1e2329]" />
      <div className="h-[13px] shrink-0 bg-[#12151c]" />
      <Ruler />
      <div className="h-[13px] shrink-0 border-b border-[#1d2125]" />
      <div className="h-[51px] shrink-0 border-b border-[#1d2125]" />
      <div className="flex-1" />
      <div className="h-[10px] shrink-0 bg-[#20232b]" />
      <div className="h-[2px] shrink-0 bg-[#17191d]" />
    </div>
  );
}

function DocIcon({ letter, color, pale }: { letter: string; color: string; pale: string }) {
  return (
    <svg width="22" height="22" viewBox="0 0 22 22">
      <path d="M6 1h15v19H6z" fill="#f6f8fa" stroke={color} />
      <path d="M14 6h6M14 9h6M14 12h6M8 16h12M8 18.500h12M8 3.500h12" stroke={pale} />
      <path d="M1 5l12-2v14L1 16z" fill={color} />
      <text x="2.500" y="14.500" fontFamily="Liberation Sans" fontSize="11" fontWeight="bold" fill="#fff">{letter}</text>
    </svg>
  );
}

function NotepadIcon() {
  return (
    <svg width="22" height="22" viewBox="0 0 22 22">
      <path d="M6 2l15 1-4 18L1 18z" fill="#7fb9bd" stroke="#b9dcdd" />
      <path d="M6 2l15 1-1 4L5 6z" fill="#d5ebeb" />
      <path d="M5 8l12 10-1 2-14-2z" fill="#4e9399" />
    </svg>
  );
}

function CamIcon({ color }: { color: string }) {
  return (
    <svg width="23" height="23" viewBox="0 0 23 23">
      <rect width="23" height="23" rx="2" fill={color} />
      <path d="M18 5.500h-8q-3.500 0-3.500 3.500v5q0 3.500 3.500 3.500h8" fill="none" stroke="#fff" strokeWidth="3.500" />
    </svg>
  );
}

const taskbarItems: { id: string; icon: ReactNode; running?: boolean; active?: boolean }[] = [
  { id: "start", icon: <svg width="16" height="16" viewBox="0 0 16 16" fill="#fff"><path d="M0 2.300l7-1v6.200H0zM8 1.200L16 0v7.500H8zM0 8.500h7v6.200l-7-1zM8 8.500h8V16l-8-1.200z" /></svg> },
  { id: "search", icon: <svg width="17" height="17" viewBox="0 0 17 17" fill="none" stroke="#fff" strokeWidth="1.500"><circle cx="10.500" cy="6" r="4.800" /><path d="M7 9.500L1 16" /></svg> },
  { id: "taskview", icon: <svg width="19" height="14" viewBox="0 0 19 14" fill="none" stroke="#fff" strokeWidth="1.200"><path d="M4 .6h11v12.800H4zM2.500 2.500H.6v9h1.900M16.500 2.500h1.900v9h-1.900" /></svg> },
  { id: "edge", icon: <svg width="20" height="21" viewBox="0 0 20 21"><path d="M1 9.500C2 3.500 6 .5 10.500.5c6 0 9 4.500 8.500 11.500H7c.2 3.500 3 5 6 5 2 0 3.500-.5 5-1.500v4c-2 1-4 1.500-6.500 1.500C6 21 3 18 3 13.500 3 10 5 7.500 7.500 6 5 6.500 2.500 7.500 1 9.500zM7 9h6.500c0-2.500-1-4-3.200-4S7.200 6.700 7 9z" fill="#1583d8" /></svg> },
  { id: "explorer", running: true, icon: <svg width="21" height="18" viewBox="0 0 21 18"><path d="M0 0h8l2 2h11v15H0z" fill="#f5d67c" /><path d="M0 4h21v9H0z" fill="#fbe49c" /><path d="M3 18v-7h15v7h-4v-4H7v4z" fill="#4bb4d3" /></svg> },
  { id: "store", icon: <svg width="20" height="22" viewBox="0 0 20 22"><path d="M6 7V3c0-3 8-3 8 0v4" fill="none" stroke="#fff" strokeWidth="1.500" /><path d="M0 7l20-1v16L0 20z" fill="#fff" /><path d="M5 11l4-.3v3.300H5zM10 10.600l5-.4V14h-5zM5 15h4v3.300L5 18zM10 15h5v3.800l-5-.4z" fill="#111" /></svg> },
  { id: "firefox", running: true, icon: <svg width="22" height="22" viewBox="0 0 22 22"><circle cx="11" cy="11" r="10.500" fill="#e2651c" /><circle cx="11.500" cy="8.500" r="7.500" fill="#3b8fd0" /><path d="M1 8c1-4 3-5 4-6 0 2 1 3 3 3-1 2 1 3 3 3-1 2-3 2-3 4 1 4 6 3 8 1 3-3 3-6 2-8 3 3 4 8 2 12-3 5-11 6-16 1C1 15 .5 11 1 8z" fill="#e8701e" /><path d="M17 3c4 4 4 9 2 12 1-4 0-8-2-12z" fill="#fbc93c" /></svg> },
  { id: "chrome", icon: <svg width="21" height="21" viewBox="0 0 21 21"><circle cx="10.500" cy="10.500" r="10.500" fill="#e33b2e" /><path d="M1.400 5.300A10.500 10.500 0 0 0 10 21l4.500-8z" fill="#2fa04e" /><path d="M20 6H10.500l4.300 7L10 21A10.500 10.500 0 0 0 20 6z" fill="#fbce32" /><circle cx="10.500" cy="10.500" r="5" fill="#fff" /><circle cx="10.500" cy="10.500" r="3.900" fill="#4385f0" /></svg> },
  { id: "excel", running: true, active: true, icon: <DocIcon letter="X" color="#5b9a45" pale="#8cc078" /> },
  { id: "word", running: true, icon: <DocIcon letter="W" color="#3f66ae" pale="#8ba6d6" /> },
  { id: "recorder", running: true, icon: <CamIcon color="#f04c3c" /> },
  { id: "monitor", running: true, icon: <svg width="22" height="20" viewBox="0 0 22 20"><path d="M3 1l18 1-1 13H4z" fill="#dbe3ea" stroke="#8f979e" /><path d="M5 3l14 1-1 8H6z" fill="#a9c6dd" /><path d="M6 10l3-3 2 3 3-5 3 5" stroke="#fff" fill="none" /><path d="M1 13h9v4H1zM9 16h7l2 3H8z" fill="#b9bec2" /></svg> },
  { id: "notepad1", running: true, icon: <NotepadIcon /> },
  { id: "clapper", running: true, icon: <svg width="22" height="22" viewBox="0 0 22 22"><path d="M0 8h22v14H0z" fill="#fff" /><path d="M0 2h22v5H0z" fill="#fff" /><path d="M2 2l4 5M8 2l4 5M14 2l4 5M20 2l4 5" stroke="#111" strokeWidth="2" /></svg> },
  { id: "notepad2", running: true, icon: <NotepadIcon /> },
  { id: "folder", running: true, icon: <svg width="18" height="20" viewBox="0 0 18 20"><path d="M0 0h17v20H0z" fill="#f4d470" /><path d="M7 3h10v8H7z" fill="#f8f8f4" stroke="#b5b5a8" /><path d="M9 5.500h2M12 5.500h3M9 8h6" stroke="#555" /></svg> },
  { id: "winrar", running: true, icon: <svg width="23" height="20" viewBox="0 0 23 20"><path d="M1 7L13 0l9 4-12 8z" fill="#d9282f" /><path d="M1 7l9 5v3L1 10z" fill="#a81a20" /><path d="M10 12l12-8v3l-12 8z" fill="#7c1216" /><path d="M1 10l9 5 12-8v3l-12 8-9-5z" fill="#3c69c9" /><path d="M1 13l9 5 12-8v2l-12 8-9-5z" fill="#43a047" /><path d="M8 2.500l8 5" stroke="#e9a5a7" strokeWidth="2" /></svg> },
  { id: "camtasia", running: true, icon: <CamIcon color="#62b01e" /> },
];

function Taskbar() {
  return (
    <div className="relative flex h-[38px] bg-[#020306] font-['Noto_Sans',sans-serif]">
      <div className="absolute left-[579px] top-0 h-[23px] w-[551px] bg-[#232323] pl-[13px] text-[12px] leading-[23px] text-[#4c4c4c]">3 it</div>
      <div className="relative -ml-px flex">
        {taskbarItems.map((item) => (
          <div
            key={item.id}
            className={clsx("flex w-[46.05px] shrink-0 flex-col items-center", item.active && "bg-[#2c2d2f]")}
          >
            <div className="flex h-[35px] items-center pt-[3px]">{item.icon}</div>
            {item.running && <span className={clsx("h-[3px] bg-[#70ade0]", item.active ? "w-full" : "w-[37px]")} />}
          </div>
        ))}
      </div>
      <div className="relative ml-auto mr-[150px] flex w-[238px] items-center text-[11px] text-[#b8b9ba]">
        <span className="w-[49px] tracking-[-0.3px]">Dropbox</span>
        <span className="w-[19px] pb-[18px] text-[13px] font-bold text-white">»</span>
        <span className="w-[47px] whitespace-nowrap tracking-[-0.2px]">data (E:)</span>
        <span className="w-[13px] pb-[18px] text-[13px] font-bold text-white">»</span>
        <Cell className="w-[22px]"><svg width="11" height="7" viewBox="0 0 11 7" fill="none" stroke="#ddd" strokeWidth="1.500"><path d="M.5 6l5-5 5 5" /></svg></Cell>
        <Cell className="w-[23px]"><SiDropbox className="size-[13px] text-white" /></Cell>
        <Cell className="w-[22px]"><svg width="14" height="9" viewBox="0 0 14 9" fill="none" stroke="#fff"><path d="M.5.5h12v8H.5z" /><path d="M2 2h6v5H2z" fill="#fff" /><path d="M13.500 3v3" /></svg></Cell>
        <Cell className="w-[23px]">
          <svg width="15" height="15" viewBox="0 0 15 15" fill="none" stroke="#777" strokeWidth="1.200"><path d="M4 14A10 10 0 0 1 14 4M7 14a7 7 0 0 1 7-7M10 14a4 4 0 0 1 4-4" /><path d="M2 0v5M0 1l4 3M4 1L0 4" stroke="#fff" strokeWidth="1" /></svg>
        </Cell>
        <Cell className="w-[20px]"><svg width="16" height="14" viewBox="0 0 16 14" fill="none" stroke="#fff" strokeWidth="1.200"><path d="M.6 4.500h2.500L7 1.500v11L3.100 9.500H.6zM9 4.500q1.500 2.500 0 5M11 3q2.800 4 0 8M13 1.500q4 5.500 0 11" /></svg></Cell>
      </div>
    </div>
  );
}

export default function App() {
  return (
    <div className="relative h-[720px] w-[1280px] overflow-hidden bg-black">
      <Camtasia />
      <Taskbar />
      <ExcelWindow />
      {/* webcam area, no signal */}
      <div className="absolute left-[1130px] top-[608px] h-[112px] w-[150px] bg-black" />
    </div>
  );
}
